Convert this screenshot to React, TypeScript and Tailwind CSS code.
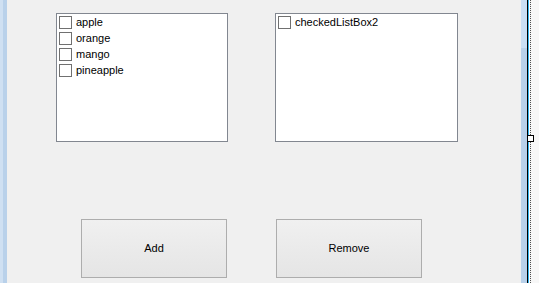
import React from "react";

const font = { fontFamily: '"Liberation Sans", Arial, sans-serif' };

function Item({ label }: { label: string }) {
  return (
    <div className="flex items-center h-[16px]">
      <div className="w-[13px] h-[13px] border border-[#707070] bg-white shrink-0" />
      <span className="ml-[4px] text-[11px] leading-[13px] text-black">{label}</span>
    </div>
  );
}

function Button({ label }: { label: string }) {
  return (
    <div className="w-[146px] h-[59px] border border-[#adadad] bg-gradient-to-b from-[#f0f0f0] to-[#e5e5e5] flex items-center justify-center text-[11px] text-black">
      {label}
    </div>
  );
}

export default function App() {
  return (
    <div className="w-[539px] h-[283px] flex overflow-hidden bg-[#f0f0f0]" style={font}>
      <div className="w-[3px] h-full bg-[#cfe0f2]" />
      <div className="w-[4px] h-full bg-[#b9d1ea]" />
      <div className="w-[514px] h-full flex flex-col pt-[13px]">
        <div className="flex pl-[49px] gap-[47px]">
          <div className="w-[172px] h-[129px] border border-[#828790] bg-white pl-[2px]">
            <Item label="apple" />
            <Item label="orange" />
            <Item label="mango" />
            <Item label="pineapple" />
          </div>
          <div className="w-[183px] h-[129px] border border-[#828790] bg-white pl-[2px]">
            <Item label="checkedListBox2" />
          </div>
        </div>
        <div className="flex pl-[74px] gap-[49px] mt-[77px]">
          <Button label="Add" />
          <Button label="Remove" />
        </div>
      </div>
      <div className="relative flex h-full">
        <div className="w-[6px] h-full flex flex-col">
          <div className="h-[48px] bg-[#cadff4]" />
          <div className="flex-1 bg-[#b9d1ea]" />
        </div>
        <div className="w-[1px] h-full bg-black" />
        <div className="w-[1px] h-full bg-[#35b6f0]" />
        <div className="w-[1px] h-full bg-white" />
        <div className="w-[1px] h-full border-l border-dotted border-[#505050]" />
        <div className="w-[8px] h-full bg-[#f7f7f7]" />
        <div className="absolute left-[6px] top-[135px] w-[7px] h-[7px] border border-black bg-white" />
      </div>
    </div>
  );
}
